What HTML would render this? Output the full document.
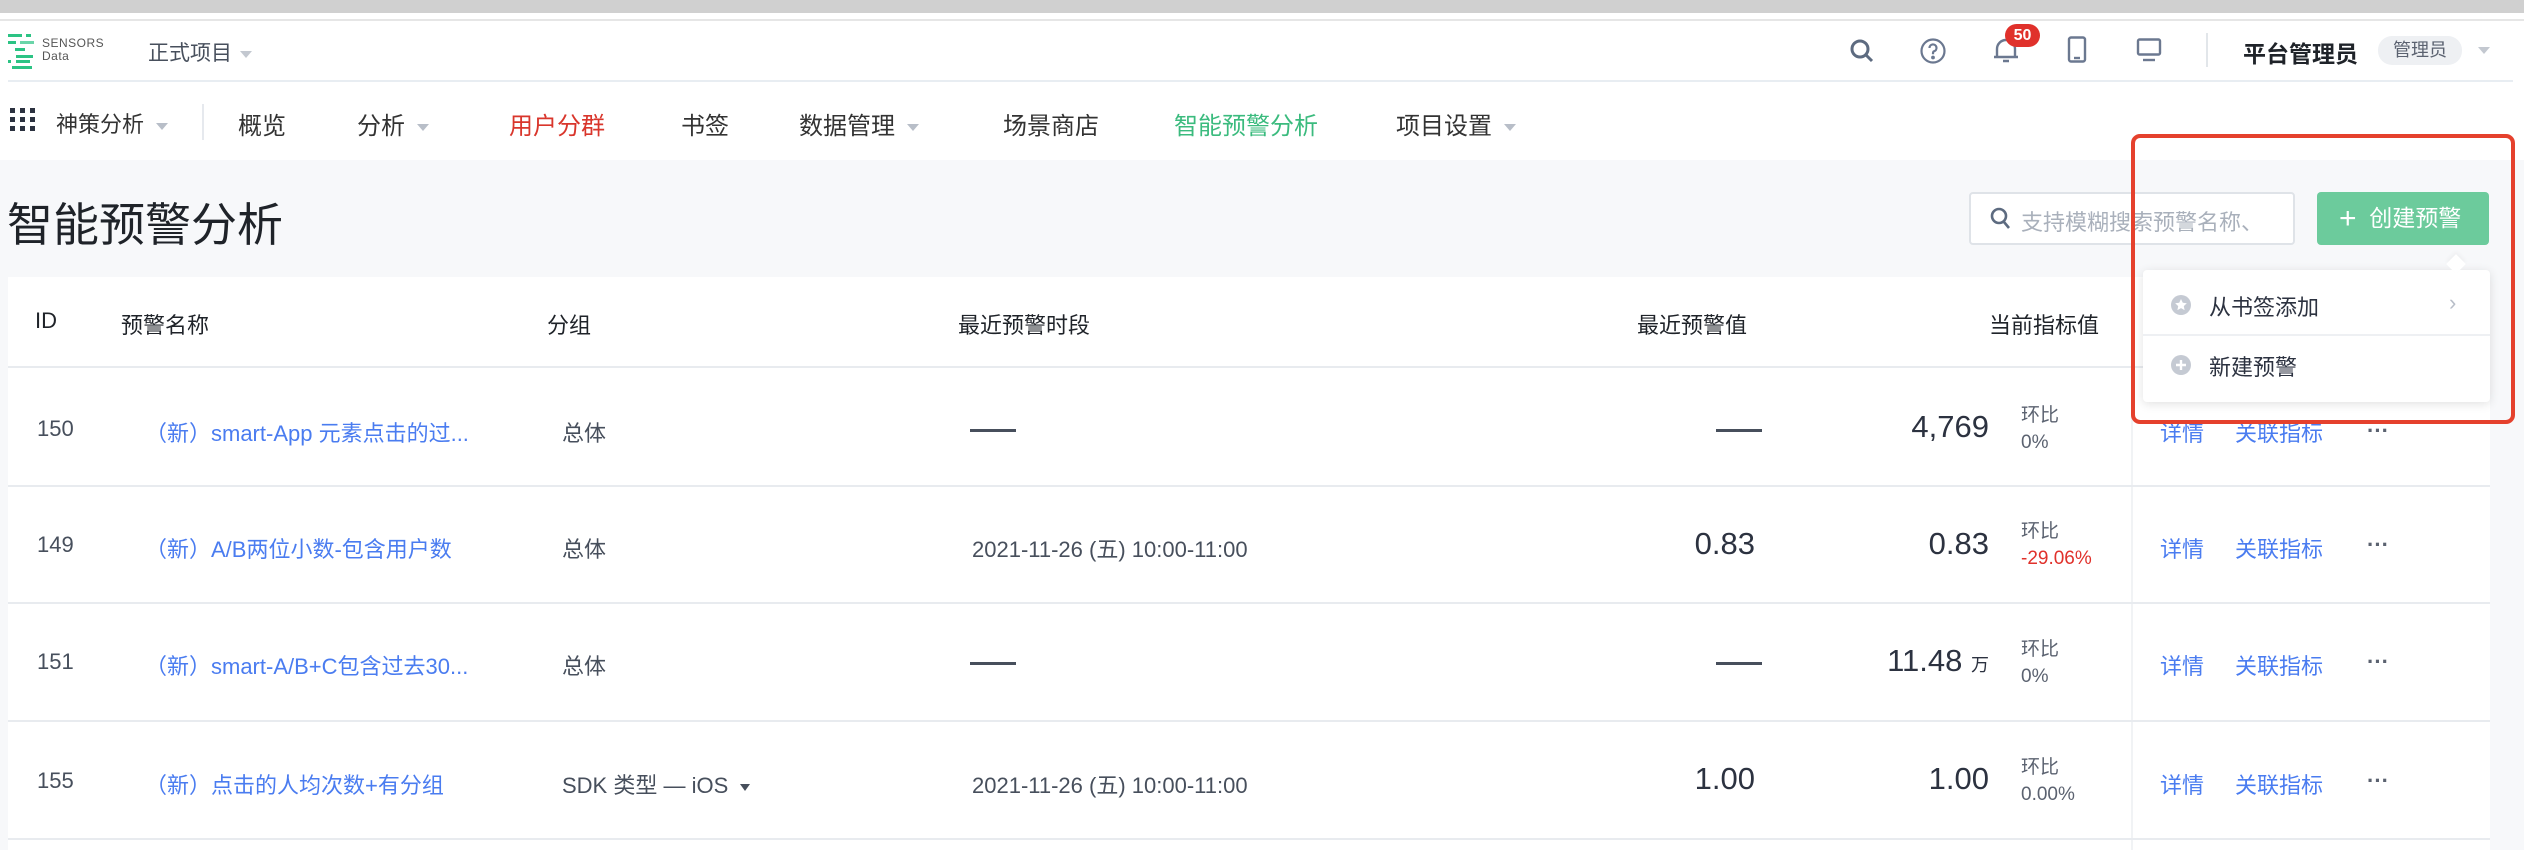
<!DOCTYPE html>
<html><head><meta charset="utf-8"><style>
*{margin:0;padding:0;box-sizing:border-box}
body{width:2524px;height:850px;overflow:hidden;background:#f7f8fa;font-family:"Liberation Sans","Noto Sans CJK SC",sans-serif;color:#2c3240;position:relative}
.a{position:absolute;white-space:nowrap}
.nav{font-size:24px;color:#333;top:106px}
.tri{display:inline-block;width:0;height:0;border-left:6px solid transparent;border-right:6px solid transparent;border-top:7px solid #b8bec8;vertical-align:middle;margin-left:12px}
.th{font-size:22px;color:#1f2329;top:308px}
.td{font-size:22px;color:#474f5c}
.nm{font-size:22px;color:#4a7cf0}
.big{font-size:31px;color:#2c3240}
.sm{font-size:19px;color:#5b6270}
.ln{position:absolute;left:8px;width:2482px;height:2px;background:#e8ebef}
.lk{font-size:22px;color:#4a7cf0}
.dd{font-size:22px;color:#5b6270;font-weight:bold}
.dash{position:absolute;width:46px;height:3px;background:#474f5c}
</style></head><body>
<div class="a" style="left:0;top:0;width:2524px;height:13px;background:#d0d0d0"></div>
<div class="a" style="left:0;top:13px;width:2524px;height:147px;background:#fff"></div>
<div class="a" style="left:0;top:19px;width:2524px;height:2px;background:#e6e6e6"></div>
<div class="a" style="left:8px;top:80px;width:2505px;height:2px;background:#e8edf2"></div>
<svg class="a" style="left:8px;top:34px" width="28" height="36" viewBox="0 0 28 36"><g fill="#2cc384"><rect x="0" y="0" width="14" height="3"/><rect x="18" y="0" width="5" height="3"/><rect x="0" y="7" width="8" height="3"/><rect x="12" y="7" width="14" height="3" opacity=".7"/><rect x="7" y="14" width="10" height="3"/><rect x="8" y="21" width="17" height="3"/><rect x="0" y="26" width="3" height="3"/><rect x="8" y="26" width="14" height="3"/><rect x="4" y="32" width="20" height="3"/></g></svg>
<div class="a" style="left:42px;top:37px;font-size:12px;line-height:13px;color:#555;letter-spacing:.5px">SENSORS<br>Data</div>
<div class="a" style="left:148px;top:37px;font-size:21px;color:#474f5c">正式项目<span class="tri" style="margin-left:8px;border-top-color:#c3c8d0"></span></div>
<svg class="a" style="left:1849px;top:38px" width="26" height="26" viewBox="0 0 26 26" fill="none" stroke="#5d6b80" stroke-width="3"><circle cx="11" cy="11" r="8"/><path d="M17 17l6 6"/></svg>
<svg class="a" style="left:1919px;top:37px" width="28" height="28" viewBox="0 0 28 28" fill="none" stroke="#6b7890" stroke-width="2.2"><circle cx="14" cy="14" r="11.5"/><path d="M10.5 11a3.5 3.5 0 1 1 4.5 3.3c-.8.3-1 1-1 2v1"/><circle cx="14" cy="20.5" r=".8" fill="#6b7890"/></svg>
<svg class="a" style="left:1992px;top:38px" width="28" height="26" viewBox="0 0 28 26" fill="none" stroke="#6b7890" stroke-width="2.4"><path d="M5 19V11a9 9 0 0 1 18 0v8M2 19h24M11 23h6"/></svg>
<div class="a" style="left:2005px;top:24px;width:35px;height:23px;border-radius:12px;background:#e0312b;color:#fff;font-size:16px;font-weight:bold;text-align:center;line-height:23px">50</div>
<svg class="a" style="left:2067px;top:36px" width="20" height="27" viewBox="0 0 20 27" fill="none" stroke="#6b7890" stroke-width="2.4"><rect x="2" y="1.5" width="16" height="24" rx="2"/><path d="M7 22h6"/></svg>
<svg class="a" style="left:2135px;top:38px" width="28" height="24" viewBox="0 0 28 24" fill="none" stroke="#6b7890" stroke-width="2.4"><rect x="3" y="1.5" width="22" height="15" rx="1.5"/><path d="M8 22h12"/></svg>
<div class="a" style="left:2206px;top:33px;width:2px;height:34px;background:#e2e6ea"></div>
<div class="a" style="left:2243px;top:35px;font-size:23px;font-weight:bold;color:#1f2329">平台管理员</div>
<div class="a" style="left:2378px;top:36px;width:84px;height:29px;border-radius:14px;background:#eef0f3;color:#5b6270;font-size:18px;text-align:center;line-height:29px">管理员</div>
<span class="tri a" style="left:2478px;top:47px;border-top-color:#c3c8d0;margin:0"></span>
<svg class="a" style="left:10px;top:108px" width="26" height="24" viewBox="0 0 26 24" fill="#2c3240"><rect x="0" y="0" width="5" height="5"/><rect x="10" y="0" width="5" height="5"/><rect x="20" y="0" width="5" height="5"/><rect x="0" y="9" width="5" height="5"/><rect x="10" y="9" width="5" height="5"/><rect x="20" y="9" width="5" height="5"/><rect x="0" y="18" width="5" height="5"/><rect x="10" y="18" width="5" height="5"/><rect x="20" y="18" width="5" height="5"/></svg>
<div class="a nav" style="left:56px;font-size:22px;top:107px">神策分析<span class="tri"></span></div>
<div class="a" style="left:202px;top:104px;width:2px;height:36px;background:#e6e9ee"></div>
<div class="a nav" style="left:238px">概览</div>
<div class="a nav" style="left:357px">分析<span class="tri"></span></div>
<div class="a nav" style="left:509px;color:#d9362c">用户分群</div>
<div class="a nav" style="left:681px">书签</div>
<div class="a nav" style="left:799px">数据管理<span class="tri"></span></div>
<div class="a nav" style="left:1003px">场景商店</div>
<div class="a nav" style="left:1174px;color:#3bbb7e">智能预警分析</div>
<div class="a nav" style="left:1396px">项目设置<span class="tri"></span></div>
<div class="a" style="left:7px;top:189px;font-size:46px;color:#1f2329">智能预警分析</div>
<div class="a" style="left:1969px;top:192px;width:326px;height:53px;background:#fff;border:2px solid #dfe3e8;border-radius:4px"></div>
<svg class="a" style="left:1990px;top:207px" width="22" height="24" viewBox="0 0 22 24" fill="none" stroke="#5d6b80" stroke-width="2.6"><circle cx="9" cy="9" r="7"/><path d="M14 15l5 6"/></svg>
<div class="a" style="left:2021px;top:205px;font-size:22px;color:#a9b0bb;width:265px;overflow:hidden">支持模糊搜索预警名称、</div>
<div class="a" style="left:2317px;top:192px;width:172px;height:53px;background:#6ccb9c;border-radius:4px;color:#fff;font-size:23px;line-height:53px;padding-left:22px"><span style="font-size:30px;vertical-align:-2px">+</span>&nbsp;&nbsp;创建预警</div>
<div class="a" style="left:8px;top:277px;width:2482px;height:573px;background:#fff"></div>
<div class="a" style="left:2131px;top:367px;width:2px;height:483px;background:#f1f3f5"></div>
<div class="a th" style="left:35px">ID</div>
<div class="a th" style="left:121px">预警名称</div>
<div class="a th" style="left:547px">分组</div>
<div class="a th" style="left:958px">最近预警时段</div>
<div class="a th" style="left:1637px">最近预警值</div>
<div class="a th" style="left:1989px">当前指标值</div>
<div class="ln" style="top:366px"></div>
<div class="ln" style="top:485px"></div>
<div class="ln" style="top:602px"></div>
<div class="ln" style="top:720px"></div>
<div class="ln" style="top:838px"></div>
<div class="a td" style="left:37px;top:416px">150</div>
<div class="a nm" style="left:145px;top:416px">（新）smart-App 元素点击的过...</div>
<div class="a td" style="left:562px;top:416px">总体</div>
<div class="dash" style="left:970px;top:429px"></div>
<div class="dash" style="left:1716px;top:429px"></div>
<div class="a big" style="right:535px;top:409px">4,769</div>
<div class="a sm" style="left:2021px;top:400px">环比</div>
<div class="a sm" style="left:2021px;top:432px">0%</div>
<div class="a td" style="left:37px;top:532px">149</div>
<div class="a nm" style="left:145px;top:532px">（新）A/B两位小数-包含用户数</div>
<div class="a td" style="left:562px;top:532px">总体</div>
<div class="a td" style="left:972px;top:532px">2021-11-26 (五) 10:00-11:00</div>
<div class="a big" style="right:769px;top:526px">0.83</div>
<div class="a big" style="right:535px;top:526px">0.83</div>
<div class="a sm" style="left:2021px;top:516px">环比</div>
<div class="a sm" style="left:2021px;top:548px;color:#e0312b">-29.06%</div>
<div class="a td" style="left:37px;top:649px">151</div>
<div class="a nm" style="left:145px;top:649px">（新）smart-A/B+C包含过去30...</div>
<div class="a td" style="left:562px;top:649px">总体</div>
<div class="dash" style="left:970px;top:662px"></div>
<div class="dash" style="left:1716px;top:662px"></div>
<div class="a big" style="right:535px;top:643px">11.48 <span style="font-size:18px">万</span></div>
<div class="a sm" style="left:2021px;top:634px">环比</div>
<div class="a sm" style="left:2021px;top:666px">0%</div>
<div class="a td" style="left:37px;top:768px">155</div>
<div class="a nm" style="left:145px;top:768px">（新）点击的人均次数+有分组</div>
<div class="a td" style="left:562px;top:768px">SDK 类型 — iOS <span class="tri" style="border-top-color:#474f5c;margin-left:6px;border-width:7px 5px 0"></span></div>
<div class="a td" style="left:972px;top:768px">2021-11-26 (五) 10:00-11:00</div>
<div class="a big" style="right:769px;top:761px">1.00</div>
<div class="a big" style="right:535px;top:761px">1.00</div>
<div class="a sm" style="left:2021px;top:752px">环比</div>
<div class="a sm" style="left:2021px;top:784px">0.00%</div>
<div class="a lk" style="left:2160px;top:416px">详情</div><div class="a lk" style="left:2235px;top:416px">关联指标</div><div class="a dd" style="left:2367px;top:418px">···</div>
<div class="a lk" style="left:2160px;top:532px">详情</div><div class="a lk" style="left:2235px;top:532px">关联指标</div><div class="a dd" style="left:2367px;top:532px">···</div>
<div class="a lk" style="left:2160px;top:649px">详情</div><div class="a lk" style="left:2235px;top:649px">关联指标</div><div class="a dd" style="left:2367px;top:649px">···</div>
<div class="a lk" style="left:2160px;top:768px">详情</div><div class="a lk" style="left:2235px;top:768px">关联指标</div><div class="a dd" style="left:2367px;top:768px">···</div>
<div class="a" style="left:2143px;top:270px;width:347px;height:132px;background:#fff;border-radius:4px;box-shadow:0 2px 10px rgba(0,0,0,.12)"></div>
<div class="a" style="left:2449px;top:257px;width:14px;height:14px;background:#fff;transform:rotate(45deg);box-shadow:-2px -2px 4px rgba(0,0,0,.04)"></div>
<div class="a" style="left:2143px;top:334px;width:347px;height:2px;background:#eef0f3"></div>
<svg class="a" style="left:2170px;top:294px" width="22" height="22" viewBox="0 0 22 22"><circle cx="11" cy="11" r="10" fill="#c5cad3"/><path d="M11 5l1.8 3.8 4 .5-3 2.8.8 4-3.6-2-3.6 2 .8-4-3-2.8 4-.5z" fill="#fff"/></svg>
<div class="a" style="left:2209px;top:290px;font-size:22px;color:#2c3240">从书签添加</div>
<div class="a" style="left:2449px;top:290px;font-size:22px;color:#b8bec8">›</div>
<svg class="a" style="left:2170px;top:354px" width="22" height="22" viewBox="0 0 22 22"><circle cx="11" cy="11" r="10" fill="#c5cad3"/><path d="M11 6v10M6 11h10" stroke="#fff" stroke-width="2.4"/></svg>
<div class="a" style="left:2209px;top:350px;font-size:22px;color:#2c3240">新建预警</div>
<div class="a" style="left:2131px;top:134px;width:384px;height:290px;border:4px solid #e5412d;border-radius:9px"></div>
</body></html>
